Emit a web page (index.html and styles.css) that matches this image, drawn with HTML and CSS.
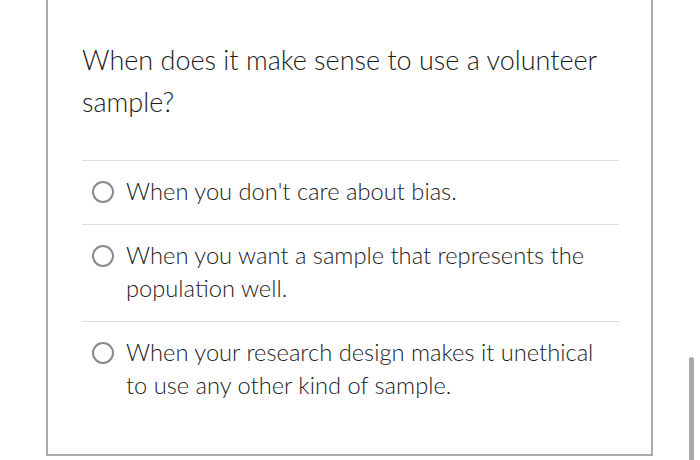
FILE: index.html
```html
<!DOCTYPE html>
<html>
<head>
<meta charset="utf-8">
<link rel="stylesheet" href="styles.css">
</head>
<body>
<div class="page">
  <div class="card">
    <div class="question">When does it make sense to use a volunteer sample?</div>
    <div class="answers">
      <label class="answer"><span class="radio"></span><span class="text">When you don't care about bias.</span></label>
      <label class="answer"><span class="radio"></span><span class="text">When you want a sample that represents the population well.</span></label>
      <label class="answer"><span class="radio"></span><span class="text">When your research design makes it unethical to use any other kind of sample.</span></label>
    </div>
  </div>
</div>
<div class="scrollbar"></div>
</body>
</html>
```

FILE: styles.css
```css
html, body {
  margin: 0;
  padding: 0;
  background: #fff;
}
body {
  font-family: Lato, "Open Sans", sans-serif;
  font-weight: 300;
  color: #1c1c1c;
  width: 700px;
  height: 460px;
  overflow: hidden;
}
.page {
  padding-left: 46px;
}
.card {
  width: 537px;
  border: 2px solid #ababab;
  border-top: none;
  padding: 39px 32px 36px 34px;
}
.question {
  font-size: 27px;
  line-height: 42px;
  margin-bottom: 37px;
}
.answers {
  border-top: 1px solid #dcdcdc;
}
.answer {
  display: flex;
  align-items: flex-start;
  padding: 14px 14px 16px 10px;
  border-bottom: 1px solid #dcdcdc;
  font-size: 23.7px;
  line-height: 33px;
}
.answer:last-child {
  border-bottom: none;
}
.radio {
  flex: none;
  width: 18px;
  height: 18px;
  border: 2px solid #8a8a8a;
  border-radius: 50%;
  margin-top: 6px;
  margin-right: 12px;
}
.scrollbar {
  position: absolute;
  left: 689px;
  top: 357px;
  width: 5px;
  height: 110px;
  background: #a9a9a9;
  border-radius: 3px;
}
```
